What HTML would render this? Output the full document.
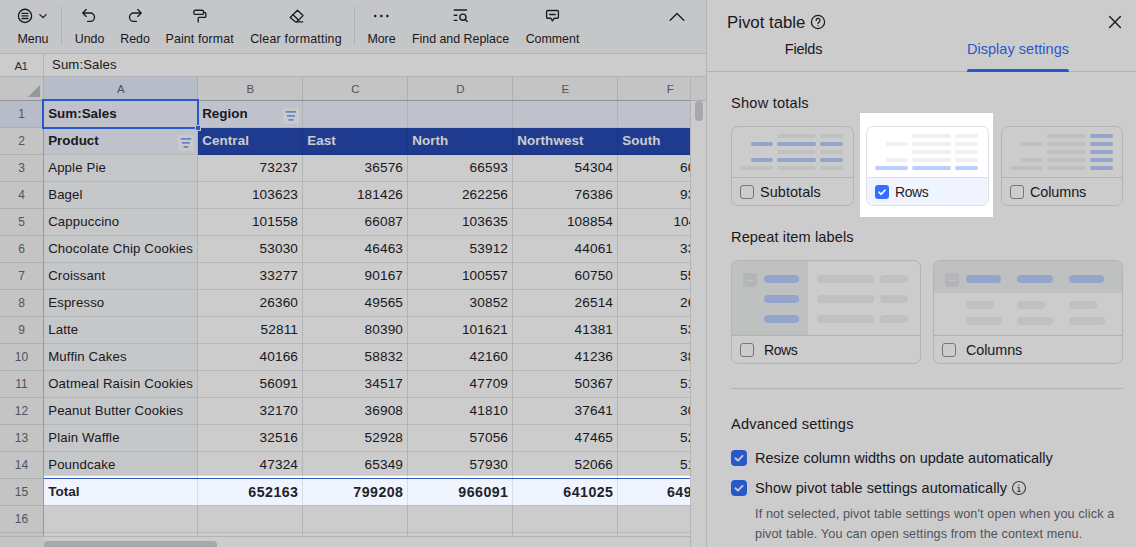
<!DOCTYPE html>
<html><head><meta charset="utf-8"><title>Pivot table</title>
<style>
*{box-sizing:border-box;margin:0;padding:0}
html,body{width:1136px;height:547px;overflow:hidden;background:#fff}
body{font-family:"Liberation Sans",sans-serif;color:#1f2329;position:relative}
.abs{position:absolute}
#tb{left:0;top:0;width:706px;height:54px;background:#f7f8fa;border-bottom:1px solid #dee0e3}
.tbi{position:absolute;top:32px;font-size:12.4px;line-height:14px;white-space:nowrap;transform:translateX(-50%);color:#1f2329}
.ico{position:absolute;top:6px;width:20px;height:20px;transform:translateX(-50%)}
.ico svg{display:block;width:20px;height:20px;fill:none;stroke:#1f2329;stroke-width:1.35;stroke-linecap:round;stroke-linejoin:round}
.sep{position:absolute;top:6px;width:1px;height:39px;background:#dee0e3}
#fb{left:0;top:54px;width:706px;height:23px;background:#fff;border-bottom:1px solid #dee0e3}
#grid{left:0;top:77px;width:690px;height:460px;overflow:hidden;background:#fff}
.ch{position:absolute;top:0;height:23px;background:#f5f6f7;border-right:1px solid #d8dadd;font-size:11.500px;line-height:25px;text-align:center;color:#646a73;padding-left:.600px}
.rh{position:absolute;left:0;width:43px;height:27px;background:#f5f6f7;border-bottom:1px solid #d8dadd;font-size:12px;line-height:27px;text-align:center;color:#646a73}
.c{position:absolute;height:27px;border-right:1px solid #dfe0e3;border-bottom:1px solid #e4e5e7;font-size:13.2px;line-height:26px;white-space:nowrap;overflow:hidden;padding:0 4px 0 4.200px}
.n{text-align:right;font-size:13.6px;letter-spacing:.12px}
.a{background:#f8f9fa;letter-spacing:.15px}
.b{font-weight:700;font-size:13.400px}
.hd{background:#eff3fe}
.hb{background:#264ab3;color:#fff;font-weight:700;font-size:13.400px;border-right-color:#2243a6;border-bottom-color:#2141a2;letter-spacing:.1px}
.tot.n{font-size:14.2px;letter-spacing:.45px;padding-right:3.600px}
.tot{background:#f0f4ff;font-weight:700;font-size:13.500px;border-right-color:#d9dcea;border-bottom-color:#dfe1e6}
#panel{left:706px;top:0;width:430px;height:547px;background:#fff;border-left:1px solid #dee0e3}
.card{position:absolute;border:1px solid #dee0e3;border-radius:7px;overflow:hidden;background:#fff}
.bar{position:absolute;height:4px;border-radius:2px;background:#eff0f1}
.cb{position:absolute;width:14px;height:14px;border:1px solid #8f959e;border-radius:3px;background:#fff}
.cbc{position:absolute;width:14px;height:14px;border-radius:3px;background:#3370ff}
.cbc svg{position:absolute;left:0;top:0;width:14px;height:14px;fill:none;stroke:#fff;stroke-width:1.6;stroke-linecap:round;stroke-linejoin:round}
.lbl{position:absolute;font-size:14.4px;line-height:18px;white-space:nowrap;color:#1f2329}
.h2{position:absolute;font-size:14.6px;line-height:18px;white-space:nowrap;color:#1f2329;letter-spacing:.1px}
</style></head><body>

<div id="tb" class="abs">
<div class="ico" style="left:25px"><svg viewBox="0 0 20 20"><circle cx="10" cy="9.9" r="6.6"/><path d="M7 7.3h6M7 9.9h6M7 12.5h6"/></svg></div>
<svg class="abs" style="left:38px;top:12px;width:10px;height:8px;fill:none;stroke:#1f2329;stroke-width:1.3;stroke-linecap:round;stroke-linejoin:round" viewBox="0 0 10 8"><path d="M1.8 2.6L5 5.6L8.2 2.6"/></svg>
<div class="tbi" style="left:33px">Menu</div>
<div class="sep" style="left:61px"></div>
<div class="ico" style="left:89px"><svg viewBox="0 0 20 20"><path d="M7.2 3.6L3.8 7l3.4 3.4M4 7h7.3a4.2 4.2 0 0 1 0 8.4H8.6"/></svg></div>
<div class="tbi" style="left:89.5px">Undo</div>
<div class="ico" style="left:135px"><svg viewBox="0 0 20 20"><path d="M12.8 3.6L16.2 7l-3.4 3.4M16 7H8.7a4.2 4.2 0 0 0 0 8.4h2.7"/></svg></div>
<div class="tbi" style="left:135px">Redo</div>
<div class="ico" style="left:200px"><svg viewBox="0 0 20 20"><rect x="3.9" y="4.2" width="9.6" height="4.2" rx="1.2"/><path d="M13.500 6.400h1.300a1 1 0 0 1 1 1v3a1 1 0 0 1-1 1H9.200a1 1 0 0 0-1 1v3.600"/></svg></div>
<div class="tbi" style="left:199.700px;letter-spacing:.13px">Paint format</div>
<div class="ico" style="left:296px"><svg viewBox="0 0 20 20"><path d="M11.5 4.2L17 9.600 10.900 15.800H9.300L4.200 11.500z"/><path d="M7 8.800l5.700 5.500M10.500 15.800h6.300"/></svg></div>
<div class="tbi" style="left:296px;letter-spacing:.22px">Clear formatting</div>
<div class="sep" style="left:354px"></div>
<div class="ico" style="left:381px"><svg viewBox="0 0 20 20"><circle cx="4.200" cy="9.900" r="1.250" fill="#1f2329" stroke="none"/><circle cx="10.300" cy="9.900" r="1.250" fill="#1f2329" stroke="none"/><circle cx="16.400" cy="9.900" r="1.250" fill="#1f2329" stroke="none"/></svg></div>
<div class="tbi" style="left:381.5px">More</div>
<div class="ico" style="left:460px"><svg viewBox="0 0 20 20"><path d="M4.200 4h12.400M4.200 9.200h2.700M4.200 14.400h2.700"/><circle cx="12.900" cy="11.200" r="3.050"/><path d="M15.200 13.500l2.100 2"/></svg></div>
<div class="tbi" style="left:460.5px">Find and Replace</div>
<div class="ico" style="left:552px"><svg viewBox="0 0 20 20"><path d="M5.600 4.500h9.800a1 1 0 0 1 1 1v5.700a1 1 0 0 1-1 1h-3.100L10.500 14.900 8.700 12.200H5.600a1 1 0 0 1-1-1V5.500a1 1 0 0 1 1-1z"/><path d="M7.700 8.500h5.600"/></svg></div>
<div class="tbi" style="left:552.5px">Comment</div>
<svg class="abs" style="left:667px;top:10px;width:20px;height:14px;fill:none;stroke:#1f2329;stroke-width:1.4;stroke-linecap:round;stroke-linejoin:round" viewBox="0 0 20 14"><path d="M3.2 10.2L10 3.6l6.8 6.6"/></svg>
</div>
<div id="fb" class="abs"><div class="abs" style="left:14.400px;top:4.500px;font-size:11.600px;line-height:14px;color:#373c43;letter-spacing:-.6px">A1</div><div class="abs" style="left:43px;top:0;width:1px;height:22px;background:#dee0e3"></div><div class="abs" style="left:52px;top:3.200px;font-size:13.200px;line-height:16px;letter-spacing:.1px">Sum:Sales</div></div>
<div id="grid" class="abs">
<div class="ch" style="left:0;width:44px"><svg class="abs" style="left:28px;top:8px;width:12px;height:12px" viewBox="0 0 12 12"><path d="M12 0v12H0z" fill="#bbbfc4"/></svg></div>
<div class="ch" style="left:44px;width:154px;background:#e7ecfa">A</div>
<div class="ch" style="left:198px;width:105px">B</div>
<div class="ch" style="left:303px;width:105px">C</div>
<div class="ch" style="left:408px;width:105px">D</div>
<div class="ch" style="left:513px;width:105px">E</div>
<div class="ch" style="left:618px;width:105px">F</div>
<div class="abs" style="left:0;top:23px;width:691px;height:1px;background:#b4b8be"></div>
<div class="rh" style="top:24px;background:#e7ecfa">1</div>
<div class="c hd b" style="left:44px;top:24px;width:154px">Sum:Sales</div>
<div class="c hd b" style="left:198px;top:24px;width:105px">Region</div>
<div class="c hd" style="left:303px;top:24px;width:105px"></div>
<div class="c hd" style="left:408px;top:24px;width:105px"></div>
<div class="c hd" style="left:513px;top:24px;width:105px"></div>
<div class="c hd" style="left:618px;top:24px;width:105px"></div>
<div class="rh" style="top:51px">2</div>
<div class="c hd b" style="left:44px;top:51px;width:154px">Product</div>
<div class="c hb" style="left:198px;top:51px;width:105px">Central</div>
<div class="c hb" style="left:303px;top:51px;width:105px">East</div>
<div class="c hb" style="left:408px;top:51px;width:105px">North</div>
<div class="c hb" style="left:513px;top:51px;width:105px">Northwest</div>
<div class="c hb" style="left:618px;top:51px;width:105px">South</div>
<div class="rh" style="top:78px">3</div>
<div class="c a" style="left:44px;top:78px;width:154px">Apple Pie</div>
<div class="c n" style="left:198px;top:78px;width:105px">73237</div>
<div class="c n" style="left:303px;top:78px;width:105px">36576</div>
<div class="c n" style="left:408px;top:78px;width:105px">66593</div>
<div class="c n" style="left:513px;top:78px;width:105px">54304</div>
<div class="c n" style="left:618px;top:78px;width:105px;text-align:left;padding-left:62px">60</div>
<div class="rh" style="top:105px">4</div>
<div class="c a" style="left:44px;top:105px;width:154px">Bagel</div>
<div class="c n" style="left:198px;top:105px;width:105px">103623</div>
<div class="c n" style="left:303px;top:105px;width:105px">181426</div>
<div class="c n" style="left:408px;top:105px;width:105px">262256</div>
<div class="c n" style="left:513px;top:105px;width:105px">76386</div>
<div class="c n" style="left:618px;top:105px;width:105px;text-align:left;padding-left:62px">93</div>
<div class="rh" style="top:132px">5</div>
<div class="c a" style="left:44px;top:132px;width:154px">Cappuccino</div>
<div class="c n" style="left:198px;top:132px;width:105px">101558</div>
<div class="c n" style="left:303px;top:132px;width:105px">66087</div>
<div class="c n" style="left:408px;top:132px;width:105px">103635</div>
<div class="c n" style="left:513px;top:132px;width:105px">108854</div>
<div class="c n" style="left:618px;top:132px;width:105px;text-align:left;padding-left:55.4px">104</div>
<div class="rh" style="top:159px">6</div>
<div class="c a" style="left:44px;top:159px;width:154px">Chocolate Chip Cookies</div>
<div class="c n" style="left:198px;top:159px;width:105px">53030</div>
<div class="c n" style="left:303px;top:159px;width:105px">46463</div>
<div class="c n" style="left:408px;top:159px;width:105px">53912</div>
<div class="c n" style="left:513px;top:159px;width:105px">44061</div>
<div class="c n" style="left:618px;top:159px;width:105px;text-align:left;padding-left:62px">33</div>
<div class="rh" style="top:186px">7</div>
<div class="c a" style="left:44px;top:186px;width:154px">Croissant</div>
<div class="c n" style="left:198px;top:186px;width:105px">33277</div>
<div class="c n" style="left:303px;top:186px;width:105px">90167</div>
<div class="c n" style="left:408px;top:186px;width:105px">100557</div>
<div class="c n" style="left:513px;top:186px;width:105px">60750</div>
<div class="c n" style="left:618px;top:186px;width:105px;text-align:left;padding-left:62px">55</div>
<div class="rh" style="top:213px">8</div>
<div class="c a" style="left:44px;top:213px;width:154px">Espresso</div>
<div class="c n" style="left:198px;top:213px;width:105px">26360</div>
<div class="c n" style="left:303px;top:213px;width:105px">49565</div>
<div class="c n" style="left:408px;top:213px;width:105px">30852</div>
<div class="c n" style="left:513px;top:213px;width:105px">26514</div>
<div class="c n" style="left:618px;top:213px;width:105px;text-align:left;padding-left:62px">26</div>
<div class="rh" style="top:240px">9</div>
<div class="c a" style="left:44px;top:240px;width:154px">Latte</div>
<div class="c n" style="left:198px;top:240px;width:105px">52811</div>
<div class="c n" style="left:303px;top:240px;width:105px">80390</div>
<div class="c n" style="left:408px;top:240px;width:105px">101621</div>
<div class="c n" style="left:513px;top:240px;width:105px">41381</div>
<div class="c n" style="left:618px;top:240px;width:105px;text-align:left;padding-left:62px">53</div>
<div class="rh" style="top:267px">10</div>
<div class="c a" style="left:44px;top:267px;width:154px">Muffin Cakes</div>
<div class="c n" style="left:198px;top:267px;width:105px">40166</div>
<div class="c n" style="left:303px;top:267px;width:105px">58832</div>
<div class="c n" style="left:408px;top:267px;width:105px">42160</div>
<div class="c n" style="left:513px;top:267px;width:105px">41236</div>
<div class="c n" style="left:618px;top:267px;width:105px;text-align:left;padding-left:62px">38</div>
<div class="rh" style="top:294px">11</div>
<div class="c a" style="left:44px;top:294px;width:154px">Oatmeal Raisin Cookies</div>
<div class="c n" style="left:198px;top:294px;width:105px">56091</div>
<div class="c n" style="left:303px;top:294px;width:105px">34517</div>
<div class="c n" style="left:408px;top:294px;width:105px">47709</div>
<div class="c n" style="left:513px;top:294px;width:105px">50367</div>
<div class="c n" style="left:618px;top:294px;width:105px;text-align:left;padding-left:62px">51</div>
<div class="rh" style="top:321px">12</div>
<div class="c a" style="left:44px;top:321px;width:154px">Peanut Butter Cookies</div>
<div class="c n" style="left:198px;top:321px;width:105px">32170</div>
<div class="c n" style="left:303px;top:321px;width:105px">36908</div>
<div class="c n" style="left:408px;top:321px;width:105px">41810</div>
<div class="c n" style="left:513px;top:321px;width:105px">37641</div>
<div class="c n" style="left:618px;top:321px;width:105px;text-align:left;padding-left:62px">30</div>
<div class="rh" style="top:348px">13</div>
<div class="c a" style="left:44px;top:348px;width:154px">Plain Waffle</div>
<div class="c n" style="left:198px;top:348px;width:105px">32516</div>
<div class="c n" style="left:303px;top:348px;width:105px">52928</div>
<div class="c n" style="left:408px;top:348px;width:105px">57056</div>
<div class="c n" style="left:513px;top:348px;width:105px">47465</div>
<div class="c n" style="left:618px;top:348px;width:105px;text-align:left;padding-left:62px">52</div>
<div class="rh" style="top:375px">14</div>
<div class="c a" style="left:44px;top:375px;width:154px">Poundcake</div>
<div class="c n" style="left:198px;top:375px;width:105px">47324</div>
<div class="c n" style="left:303px;top:375px;width:105px">65349</div>
<div class="c n" style="left:408px;top:375px;width:105px">57930</div>
<div class="c n" style="left:513px;top:375px;width:105px">52066</div>
<div class="c n" style="left:618px;top:375px;width:105px;text-align:left;padding-left:62px">51</div>
<div class="rh" style="top:402px">15</div>
<div class="c tot" style="left:44px;top:402px;width:154px">Total</div>
<div class="c tot n" style="left:198px;top:402px;width:105px">652163</div>
<div class="c tot n" style="left:303px;top:402px;width:105px">799208</div>
<div class="c tot n" style="left:408px;top:402px;width:105px">966091</div>
<div class="c tot n" style="left:513px;top:402px;width:105px">641025</div>
<div class="c tot n" style="left:618px;top:402px;width:105px;text-align:left;padding-left:49px">649</div>
<div class="rh" style="top:429px">16</div>
<div class="c " style="left:44px;top:429px;width:154px"></div>
<div class="c " style="left:198px;top:429px;width:105px"></div>
<div class="c " style="left:303px;top:429px;width:105px"></div>
<div class="c " style="left:408px;top:429px;width:105px"></div>
<div class="c " style="left:513px;top:429px;width:105px"></div>
<div class="c " style="left:618px;top:429px;width:105px"></div>
<div class="rh" style="top:456px">17</div>
<div class="c " style="left:44px;top:456px;width:154px"></div>
<div class="c " style="left:198px;top:456px;width:105px"></div>
<div class="c " style="left:303px;top:456px;width:105px"></div>
<div class="c " style="left:408px;top:456px;width:105px"></div>
<div class="c " style="left:513px;top:456px;width:105px"></div>
<div class="c " style="left:618px;top:456px;width:105px"></div>
<div class="abs" style="left:44px;top:401px;width:647px;height:1px;background:#3358c0"></div>
<div class="abs" style="left:43px;top:24px;width:1px;height:436px;background:#bbbfc4"></div>
<div class="abs" style="left:282.800px;top:31.2px;width:16px;height:15.500px;background:#fdfdfe;border-radius:2.500px;overflow:hidden"><svg viewBox="0 0 16 16" style="display:block;width:16px;height:16px;fill:none;stroke:#7fa2ff;stroke-width:1.850"><path d="M2.700 3.900h10.500M4 7.800h7.900M5.500 11.900h4.900"/></svg></div>
<div class="abs" style="left:178px;top:58.1px;width:16px;height:15.500px;background:#fdfdfe;border-radius:2.500px;overflow:hidden"><svg viewBox="0 0 16 16" style="display:block;width:16px;height:16px;fill:none;stroke:#7fa2ff;stroke-width:1.850"><path d="M2.700 3.900h10.500M4 7.800h7.900M5.500 11.900h4.900"/></svg></div>
<div class="abs" style="left:42.400px;top:22.4px;width:156.400px;height:29.500px;border:2px solid #3370ff"></div>
<div class="abs" style="left:195.200px;top:47.5px;width:6px;height:6px;background:#3370ff;border:1px solid #eff3fe"></div>
</div>
<div class="abs" style="left:690px;top:77px;width:16px;height:470px;background:#fff;border-left:1px solid #dee0e3"></div>
<div class="abs" style="left:690px;top:77px;width:16px;height:24px;background:#f5f6f7;border-left:1px solid #dee0e3;border-bottom:1px solid #d5d7da"></div>
<div class="abs" style="left:695px;top:101px;width:8px;height:20px;border-radius:4px;background:#d0d3d6"></div>
<div class="abs" style="left:0;top:536px;width:690px;height:11px;background:#fff;border-top:1px solid #dee0e3"></div>
<div class="abs" style="left:0;top:536px;width:43.500px;height:11px;background:#f5f6f7;border-top:1px solid #dee0e3"></div>
<div class="abs" style="left:44px;top:541px;width:173px;height:8px;border-radius:4px;background:#d0d3d6"></div>
<div id="panel" class="abs">
<div class="abs" style="left:20px;top:13px;font-size:16.8px;line-height:20px;white-space:nowrap;letter-spacing:0">Pivot table</div>
<svg class="abs" style="left:103px;top:14px;width:16px;height:16px;fill:none;stroke:#1f2329;stroke-width:1.25;stroke-linecap:round;stroke-linejoin:round" viewBox="0 0 16 16"><circle cx="8" cy="8" r="6.6"/><path d="M6.1 6.4a1.95 1.95 0 1 1 2.9 1.7c-.6.35-1 .8-1 1.500"/><circle cx="8" cy="11.6" r=".55" fill="#1f2329" stroke="none"/></svg>
<svg class="abs" style="left:400px;top:14px;width:16px;height:16px;fill:none;stroke:#1f2329;stroke-width:1.4;stroke-linecap:round" viewBox="0 0 16 16"><path d="M2.6 2.6l10.8 10.8M13.4 2.6L2.6 13.400"/></svg>
<div class="abs" style="left:96.500px;top:40.300px;font-size:14.5px;line-height:18px;transform:translateX(-50%);white-space:nowrap;letter-spacing:-.2px">Fields</div>
<div class="abs" style="left:311px;top:40.300px;font-size:14.5px;line-height:18px;transform:translateX(-50%);white-space:nowrap;color:#3370ff;letter-spacing:.04px">Display settings</div>
<div class="abs" style="left:0;top:71px;width:430px;height:1px;background:#dee0e3"></div>
<div class="abs" style="left:260px;top:69px;width:102px;height:3px;background:#3370ff;border-radius:2px 2px 0 0"></div>
<div class="h2" style="left:24px;top:94px;letter-spacing:.22px">Show totals</div>
<div class="card" style="left:24px;top:126px;width:123px;height:80px">
<div class="abs" style="left:0;top:0;width:122px;height:50px"><div class="bar" style="left:45px;top:7px;width:39px;background:#eff0f1"></div><div class="bar" style="left:88px;top:7px;width:23.4px;background:#eff0f1"></div><div class="bar" style="left:19px;top:15px;width:22px;background:#bacefd"></div><div class="bar" style="left:45px;top:15px;width:39px;background:#bacefd"></div><div class="bar" style="left:88px;top:15px;width:23.4px;background:#bacefd"></div><div class="bar" style="left:45px;top:23px;width:39px;background:#eff0f1"></div><div class="bar" style="left:88px;top:23px;width:23.4px;background:#eff0f1"></div><div class="bar" style="left:19px;top:31px;width:22px;background:#bacefd"></div><div class="bar" style="left:45px;top:31px;width:39px;background:#bacefd"></div><div class="bar" style="left:88px;top:31px;width:23.4px;background:#bacefd"></div><div class="bar" style="left:8px;top:38.5px;width:33px;background:#eff0f1"></div><div class="bar" style="left:45px;top:38.5px;width:39px;background:#eff0f1"></div><div class="bar" style="left:88px;top:38.5px;width:23.4px;background:#eff0f1"></div></div>
<div class="abs" style="left:0;top:50px;width:122px;height:29px;border-top:1px solid #dee0e3;background:#fff">
<div class="cb" style="left:8px;top:7px"></div>
<div class="lbl" style="left:28px;top:5px;letter-spacing:.1px">Subtotals</div>
</div></div>
<div class="card" style="left:159px;top:126px;width:123px;height:80px">
<div class="abs" style="left:0;top:0;width:122px;height:50px"><div class="bar" style="left:45px;top:7px;width:39px;background:#eff0f1"></div><div class="bar" style="left:88px;top:7px;width:23.4px;background:#eff0f1"></div><div class="bar" style="left:19px;top:15px;width:22px;background:#eff0f1"></div><div class="bar" style="left:45px;top:15px;width:39px;background:#eff0f1"></div><div class="bar" style="left:88px;top:15px;width:23.4px;background:#eff0f1"></div><div class="bar" style="left:45px;top:23px;width:39px;background:#eff0f1"></div><div class="bar" style="left:88px;top:23px;width:23.4px;background:#eff0f1"></div><div class="bar" style="left:19px;top:31px;width:22px;background:#eff0f1"></div><div class="bar" style="left:45px;top:31px;width:39px;background:#eff0f1"></div><div class="bar" style="left:88px;top:31px;width:23.4px;background:#eff0f1"></div><div class="bar" style="left:8px;top:38.5px;width:33px;background:#bacefd"></div><div class="bar" style="left:45px;top:38.5px;width:39px;background:#bacefd"></div><div class="bar" style="left:88px;top:38.5px;width:23.4px;background:#bacefd"></div></div>
<div class="abs" style="left:0;top:50px;width:122px;height:29px;border-top:1px solid #dee0e3;background:#f0f4ff">
<div class="cbc" style="left:8px;top:7px"><svg viewBox="0 0 14 14"><path d="M3.900 7.200l2.200 2.100 4-4.200"/></svg></div>
<div class="lbl" style="left:28px;top:5px;letter-spacing:-.45px;font-size:14px">Rows</div>
</div></div>
<div class="card" style="left:294px;top:126px;width:122px;height:80px">
<div class="abs" style="left:0;top:0;width:122px;height:50px"><div class="bar" style="left:45px;top:7px;width:39px;background:#eff0f1"></div><div class="bar" style="left:88px;top:7px;width:23.4px;background:#bacefd"></div><div class="bar" style="left:19px;top:15px;width:22px;background:#eff0f1"></div><div class="bar" style="left:45px;top:15px;width:39px;background:#eff0f1"></div><div class="bar" style="left:88px;top:15px;width:23.4px;background:#bacefd"></div><div class="bar" style="left:45px;top:23px;width:39px;background:#eff0f1"></div><div class="bar" style="left:88px;top:23px;width:23.4px;background:#bacefd"></div><div class="bar" style="left:19px;top:31px;width:22px;background:#eff0f1"></div><div class="bar" style="left:45px;top:31px;width:39px;background:#eff0f1"></div><div class="bar" style="left:88px;top:31px;width:23.4px;background:#bacefd"></div><div class="bar" style="left:8px;top:38.5px;width:33px;background:#eff0f1"></div><div class="bar" style="left:45px;top:38.5px;width:39px;background:#eff0f1"></div><div class="bar" style="left:88px;top:38.5px;width:23.4px;background:#bacefd"></div></div>
<div class="abs" style="left:0;top:50px;width:122px;height:29px;border-top:1px solid #dee0e3;background:#fff">
<div class="cb" style="left:8px;top:7px"></div>
<div class="lbl" style="left:28px;top:5px;letter-spacing:-.08px">Columns</div>
</div></div>
<div class="h2" style="left:24px;top:228px">Repeat item labels</div>
<div class="card" style="left:24px;top:260px;width:190px;height:103.500px">
<div class="abs" style="left:0;top:0;width:76px;height:74px;background:#eff0f1"></div>
<div class="abs" style="left:11px;top:12px;width:14px;height:14px;border-radius:3px;background:#e1e3e6"><div class="abs" style="left:3.500px;top:6.500px;width:7px;height:1.500px;background:#f2f3f5"></div></div>
<div class="bar" style="left:31.700px;top:14px;width:35.500px;height:8px;border-radius:4px;background:#bacefd"></div>
<div class="bar" style="left:85px;top:14px;width:57px;height:8px;border-radius:4px;background:#eff0f1"></div>
<div class="bar" style="left:148px;top:14px;width:28px;height:8px;border-radius:4px;background:#eff0f1"></div>
<div class="bar" style="left:31.700px;top:34px;width:35.500px;height:8px;border-radius:4px;background:#bacefd"></div>
<div class="bar" style="left:85px;top:34px;width:57px;height:8px;border-radius:4px;background:#eff0f1"></div>
<div class="bar" style="left:148px;top:34px;width:28px;height:8px;border-radius:4px;background:#eff0f1"></div>
<div class="bar" style="left:31.700px;top:54px;width:35.500px;height:8px;border-radius:4px;background:#bacefd"></div>
<div class="bar" style="left:85px;top:54px;width:57px;height:8px;border-radius:4px;background:#eff0f1"></div>
<div class="bar" style="left:148px;top:54px;width:28px;height:8px;border-radius:4px;background:#eff0f1"></div>
<div class="abs" style="left:0;top:74px;width:190px;height:29px;border-top:1px solid #dee0e3"><div class="cb" style="left:8px;top:7px"></div><div class="lbl" style="left:32px;top:5px;letter-spacing:-.45px;font-size:14px">Rows</div></div>
</div>
<div class="card" style="left:226px;top:260px;width:190px;height:103.500px">
<div class="abs" style="left:0;top:0;width:190px;height:32px;background:#eff0f1"></div>
<div class="abs" style="left:11px;top:12px;width:14px;height:14px;border-radius:3px;background:#e1e3e6"><div class="abs" style="left:3.500px;top:6.500px;width:7px;height:1.500px;background:#f2f3f5"></div></div>
<div class="bar" style="left:31.7px;top:14px;width:35.500px;height:8px;border-radius:4px;background:#bacefd"></div>
<div class="bar" style="left:31.7px;top:40px;width:28px;height:8px;border-radius:4px;background:#eff0f1"></div>
<div class="bar" style="left:31.7px;top:56px;width:36px;height:8px;border-radius:4px;background:#eff0f1"></div>
<div class="bar" style="left:83.2px;top:14px;width:35.500px;height:8px;border-radius:4px;background:#bacefd"></div>
<div class="bar" style="left:83.2px;top:40px;width:28px;height:8px;border-radius:4px;background:#eff0f1"></div>
<div class="bar" style="left:83.2px;top:56px;width:36px;height:8px;border-radius:4px;background:#eff0f1"></div>
<div class="bar" style="left:134.7px;top:14px;width:35.500px;height:8px;border-radius:4px;background:#bacefd"></div>
<div class="bar" style="left:134.7px;top:40px;width:28px;height:8px;border-radius:4px;background:#eff0f1"></div>
<div class="bar" style="left:134.7px;top:56px;width:36px;height:8px;border-radius:4px;background:#eff0f1"></div>
<div class="abs" style="left:0;top:74px;width:190px;height:29px;border-top:1px solid #dee0e3"><div class="cb" style="left:8px;top:7px"></div><div class="lbl" style="left:32px;top:5px;letter-spacing:-.08px">Columns</div></div>
</div>
<div class="abs" style="left:24px;top:388px;width:392px;height:1px;background:#dee0e3"></div>
<div class="h2" style="left:24px;top:415px;letter-spacing:.2px">Advanced settings</div>
<div class="cbc" style="left:24px;top:450px;width:16px;height:16px;border-radius:4px"><svg viewBox="0 0 14 14" style="width:16px;height:16px"><path d="M3.900 7.200l2.200 2.100 4-4.200"/></svg></div>
<div class="lbl" style="left:48px;top:449px;font-size:14.500px;letter-spacing:.01px">Resize column widths on update automatically</div>
<div class="cbc" style="left:24px;top:480px;width:16px;height:16px;border-radius:4px"><svg viewBox="0 0 14 14" style="width:16px;height:16px"><path d="M3.900 7.200l2.200 2.100 4-4.200"/></svg></div>
<div class="lbl" style="left:48px;top:479px;font-size:14.500px;letter-spacing:.08px">Show pivot table settings automatically</div>
<svg class="abs" style="left:304px;top:480px;width:16px;height:16px;fill:none;stroke:#51565d;stroke-width:1.15;stroke-linecap:round" viewBox="0 0 16 16"><circle cx="8" cy="8" r="6.500"/><path d="M8 7.2v4M6.900 7.2H8M6.800 11.300h2.400"/><circle cx="8" cy="4.900" r=".7" fill="#51565d" stroke="none"/></svg>
<div class="abs" style="left:48px;top:505.700px;font-size:12.600px;line-height:16px;color:#646a73;white-space:nowrap;letter-spacing:.15px">If not selected, pivot table settings won't open when you click a</div>
<div class="abs" style="left:48px;top:525.700px;font-size:12.600px;line-height:16px;color:#646a73;white-space:nowrap;letter-spacing:.13px">pivot table. You can open settings from the context menu.</div>
</div>
<svg class="abs" style="left:0;top:0;width:1136px;height:547px;pointer-events:none" viewBox="0 0 1136 547"><path fill-rule="evenodd" fill="rgba(0,0,0,0.2)" d="M0 0H1136V547H0Z M860 113H993V217H860Z M44 475.800H690.300V505.300H44Z"/></svg>
</body></html>
